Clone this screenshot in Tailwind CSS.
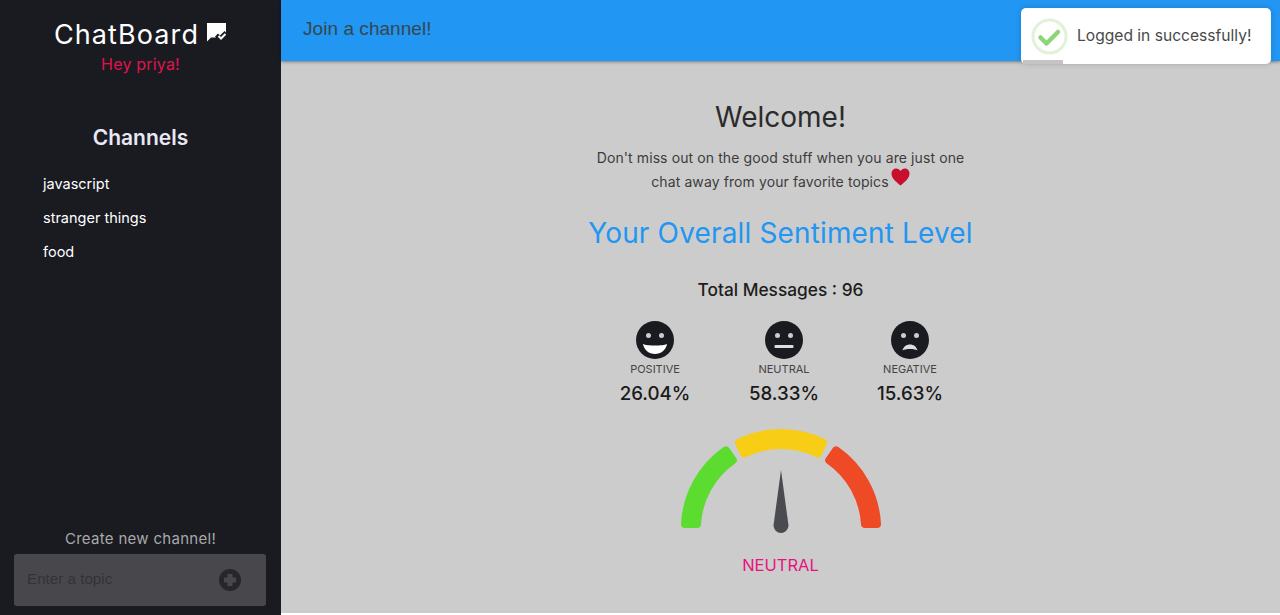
<!DOCTYPE html>
<html lang="en">
<head>
    <meta charset="UTF-8">
    <meta name="viewport" content="width=device-width, initial-scale=1.0">
    <title>ChatBoard</title>
    <script src="https://cdn.jsdelivr.net/npm/@tailwindcss/browser@4"></script>
</head>
<body class="h-[615px] overflow-hidden bg-white font-['Inter',sans-serif]">
    <div class="flex h-[613px]">
        <!-- Sidebar -->
        <aside class="w-[281px] h-[615px] shrink-0 bg-[#1a1a21] flex flex-col items-center">
            <div class="mt-[18px] h-[34px] flex items-center gap-[7px] text-[27px] leading-[34px] text-white tracking-[1.1px]">
                <span>ChatBoard</span>
                <svg class="mb-[6px]" width="21" height="20" viewBox="0 0 21 20">
                    <path fill="#fff" d="M1 1h19v9.500l-1.500-1.500-4.500 4.500-2-2-3 3 1 1H5l-4 4z"/>
                    <path fill="none" stroke="#fff" stroke-width="2" d="M12.500 14l2.500 2.500 4.500-4.500"/>
                </svg>
            </div>
            <div class="mt-[2px] text-[16px] leading-[20px] text-[#e0134f] tracking-[0.2px]">Hey priya!</div>
            <h2 class="mt-[50px] text-[21px] leading-[28px] font-semibold text-[#e8e8f5]">Channels</h2>
            <ul class="mt-[15px] w-full pl-[43px] text-[14.500px] text-white">
                <li class="h-[34px] leading-[34px]">javascript</li>
                <li class="h-[34px] leading-[34px]">stranger things</li>
                <li class="h-[34px] leading-[34px]">food</li>
            </ul>
            <div class="mt-auto mb-[9px] w-full flex flex-col items-center">
                <div class="text-[15px] leading-[20px] text-[#a9a9a9] tracking-[0.3px]">Create new channel!</div>
                <div class="mt-[5px] self-start ml-[14px] w-[252px] h-[52px] rounded-[3px] bg-[#48484c] flex items-center justify-between pl-[13px] pr-[25px]">
                    <span class="mb-[1px] whitespace-nowrap font-['Liberation_Sans',sans-serif] text-[15.200px] text-[#333337]">Enter a topic</span>
                    <svg width="22" height="22" viewBox="0 0 22 22">
                        <circle cx="11" cy="11" r="11" fill="#27272b"/>
                        <path stroke="#48484c" stroke-width="5" d="M11 5v12M5 11h12"/>
                    </svg>
                </div>
            </div>
        </aside>

        <div class="flex-1 flex flex-col">
            <!-- Top bar -->
            <header class="h-[61px] shrink-0 bg-[#2196f3] flex items-center pl-[22px] pb-[3px] font-['Liberation_Sans',sans-serif] text-[19px] tracking-[0.05px] text-[#37474f] shadow-[0_1px_3px_rgba(0,0,0,0.4)] z-10">
                Join a channel!
            </header>

            <!-- Welcome content -->
            <main class="flex-1 bg-[#cccccc] flex flex-col items-center">
                <h1 class="mt-[39px] text-[28px] leading-[34px] text-[#2b2b2b]">Welcome!</h1>
                <p class="mt-[12px] text-[14px] leading-[24px] text-center text-[#3c3c3c] tracking-[0.1px]">
                    Don't miss out on the good stuff when you are just one<br>
                    chat away from your favorite topics
                    <svg class="inline-block align-[1px] -mt-[8px] ml-[-2px]" width="19" height="18" viewBox="0 0 19 18">
                        <path fill="#c8102e" d="M9.500 17.500C4 13 .5 10 .5 5.500.5 2.500 2.700.5 5.200.5c1.800 0 3.300 1 4.300 2.500C10.500 1.500 12 .5 13.800.5c2.500 0 4.700 2 4.700 5 0 4.500-3.500 7.500-9 12z"/>
                    </svg>
                </p>
                <h2 class="mt-[20px] text-[28px] leading-[38px] text-[#2196f3] tracking-[0.15px]">Your Overall Sentiment Level</h2>
                <div class="mt-[26px] text-[17.300px] leading-[24px] font-medium text-[#1d1d1d]">Total Messages : 96</div>

                <div class="mt-[18px] ml-[4px] flex text-center">
                    <div class="w-[72px] flex flex-col items-center">
                        <svg width="40" height="40" viewBox="0 0 40 40">
                            <circle cx="20" cy="20" r="19" fill="#1a1a21"/>
                            <circle cx="13.500" cy="15.500" r="2.500" fill="#ccc"/>
                            <circle cx="26.500" cy="15.500" r="2.500" fill="#ccc"/>
                            <path fill="#fff" d="M8 24c4 2 20 2 24 0C31 30 26 34 20 34S9 30 8 24z"/>
                        </svg>
                        <div class="mt-[1px] text-[11px] leading-[16px] text-[#444] whitespace-nowrap">POSITIVE</div>
                        <div class="mt-[4px] text-[18.700px] leading-[26px] font-medium text-[#1a1a1a] whitespace-nowrap">26.04%</div>
                    </div>
                    <div class="w-[72px] ml-[57px] flex flex-col items-center">
                        <svg width="40" height="40" viewBox="0 0 40 40">
                            <circle cx="20" cy="20" r="19" fill="#1a1a21"/>
                            <circle cx="13.500" cy="15.500" r="2.500" fill="#ccc"/>
                            <circle cx="26.500" cy="15.500" r="2.500" fill="#ccc"/>
                            <rect x="10.500" y="25" width="19" height="3" rx="1" fill="#ddd"/>
                        </svg>
                        <div class="mt-[1px] text-[11px] leading-[16px] text-[#444] whitespace-nowrap">NEUTRAL</div>
                        <div class="mt-[4px] text-[18.700px] leading-[26px] font-medium text-[#1a1a1a] whitespace-nowrap">58.33%</div>
                    </div>
                    <div class="w-[72px] ml-[54px] flex flex-col items-center">
                        <svg width="40" height="40" viewBox="0 0 40 40">
                            <circle cx="20" cy="20" r="19" fill="#1a1a21"/>
                            <circle cx="13.500" cy="15.500" r="2.500" fill="#ccc"/>
                            <circle cx="26.500" cy="15.500" r="2.500" fill="#ccc"/>
                            <path fill="#ddd" d="M12.500 30.500c1-4 4-6 7.500-6s6.500 2 7.500 6c-3-2-12-2-15 0z"/>
                        </svg>
                        <div class="mt-[1px] text-[11px] leading-[16px] text-[#444] whitespace-nowrap">NEGATIVE</div>
                        <div class="mt-[4px] text-[18.700px] leading-[26px] font-medium text-[#1a1a1a] whitespace-nowrap">15.63%</div>
                    </div>
                </div>

                <!-- Gauge -->
                <svg class="mt-[22px]" width="202" height="105" viewBox="0 0 202 105">
                    <g stroke-width="8" stroke-linejoin="round">
                        <path fill="#5bdc2f" stroke="#5bdc2f" d="M5 95A96 96 0 0 1 45.900 21.400L52.800 31.200A84 84 0 0 0 17 95Z"/>
                        <path fill="#f7cd16" stroke="#f7cd16" d="M59 13.700A96 96 0 0 1 143 13.700L137.800 24.500A84 84 0 0 0 64.200 24.500Z"/>
                        <path fill="#ef4a26" stroke="#ef4a26" d="M197 95A96 96 0 0 0 156.100 21.400L149.200 31.200A84 84 0 0 1 185 95Z"/>
                    </g>
                    <path fill="#4a4b50" d="M101 41l7.500 55.500a7.500 7.500 0 0 1-15 0z"/>
                </svg>
                <div class="mt-[21px] text-[16.500px] leading-[20px] text-[#e8127f]">NEUTRAL</div>
            </main>
        </div>
    </div>

    <!-- Toast -->
    <div class="absolute left-[1021px] top-[8px] w-[250px] h-[56px] rounded-[5px] bg-white flex items-center pl-[10px] gap-[9px] shadow-[0_0_6px_rgba(0,0,0,0.15)] z-20">
        <svg width="37" height="37" viewBox="0 0 37 37">
            <circle cx="18.500" cy="18.500" r="16.500" fill="none" stroke="#e1f2d8" stroke-width="3"/>
            <path fill="none" stroke="#8ed57a" stroke-width="4.500" stroke-linecap="round" stroke-linejoin="round" d="M9.500 19.500l6 6 11.500-11.500"/>
        </svg>
        <span class="mb-[1px] text-[15.600px] text-[#4a4a4a] whitespace-nowrap">Logged in successfully!</span>
        <div class="absolute left-[2px] bottom-0 w-[40px] h-[4px] bg-[#c4c4c4]"></div>
    </div>
</body>
</html>
